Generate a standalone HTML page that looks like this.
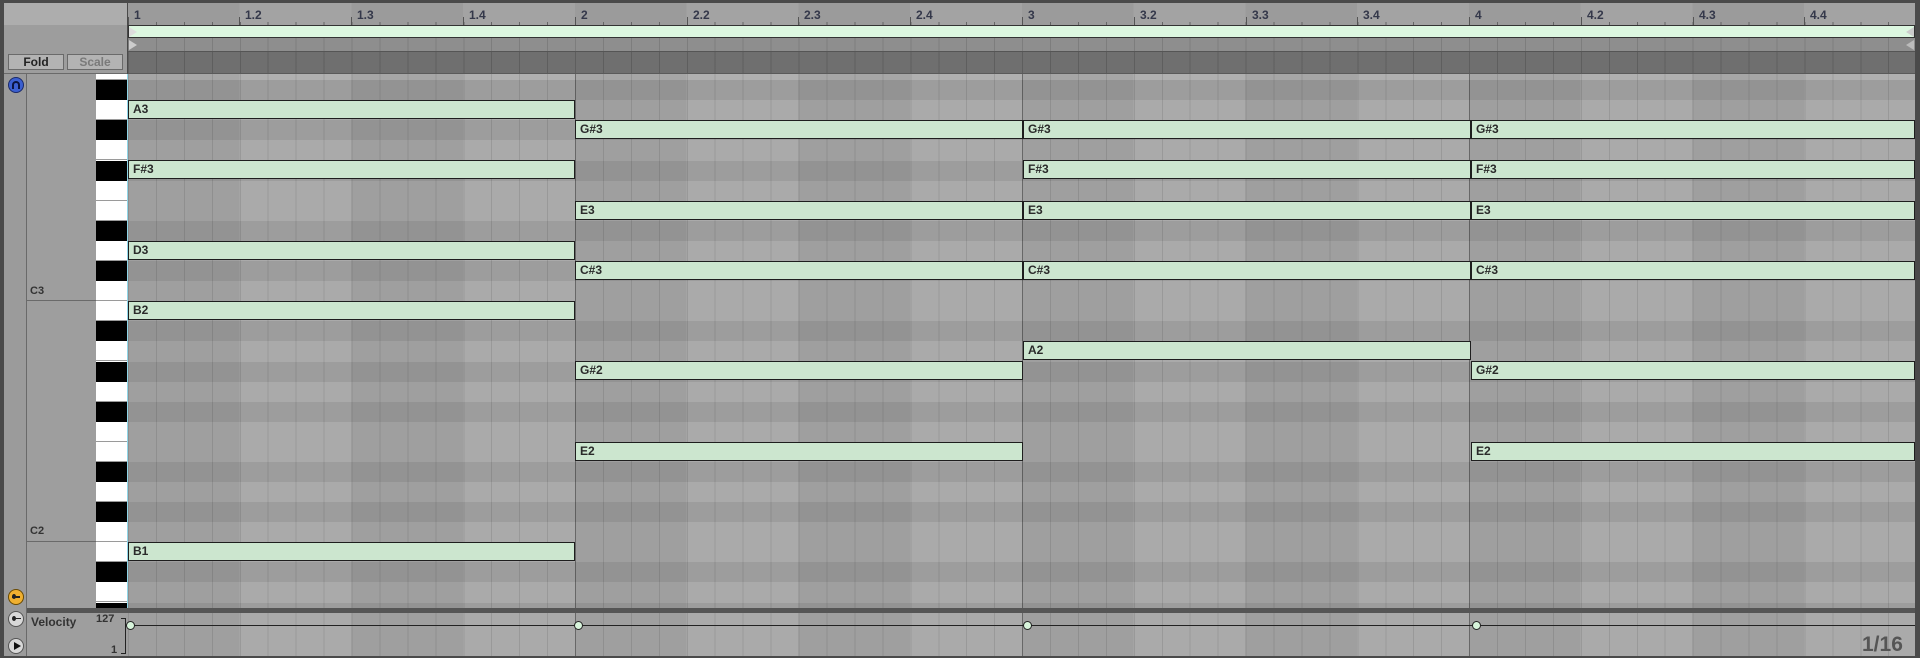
<!DOCTYPE html>
<html><head><meta charset="utf-8"><style>
*{margin:0;padding:0;box-sizing:border-box}
body{width:1920px;height:658px;overflow:hidden;background:#4a4a4a;font-family:"Liberation Sans",sans-serif;position:relative}
.a{position:absolute}
.grid{left:128px;top:74px;width:1787px;height:534px;background:#aaaaaa;overflow:hidden}
.cols{left:0;top:0;width:100%;height:100%;background:repeating-linear-gradient(90deg,rgba(0,0,0,.065) 0 111.75px,transparent 111.75px 223.5px)}
.lines{left:0;top:0;width:100%;height:100%;background:repeating-linear-gradient(90deg,rgba(0,0,0,.10) 0 1px,transparent 1px 27.94px)}
.bl{left:0;height:20px;width:100%;background:rgba(0,0,0,.075)}
.vb{top:0;width:1px;height:100%;background:rgba(0,0,0,.28)}
.n{height:18.5px;background:#cce6cf;border:1.5px solid #1e1e1e;font-size:12px;font-weight:bold;color:#2a2a2a;padding:1px 0 0 4px;line-height:14px;white-space:nowrap;overflow:hidden}
.k{left:96px;width:31px;height:20px}
.w{background:#fff;border-bottom:1px solid #9a9a9a}
.b{background:#000}
.rn{top:8px;font-size:12px;font-weight:bold;color:#34384a}
.tk{top:17px;width:1px;height:8px;background:#555}
.btn{top:54px;height:16px;background:#b3b3b3;border:1px solid #6a6a6a;font-size:12px;font-weight:bold;text-align:center;line-height:14px}
.ico{left:8px;width:16px;height:16px;border-radius:50%}
</style></head><body>
<div class="a" style="left:4px;top:3px;width:123px;height:49px;background:#adadad"></div>
<div class="a" style="left:4px;top:25px;width:123px;height:48px;background:#9d9d9d"></div>
<div class="btn a" style="left:8px;width:56px;color:#222">Fold</div>
<div class="btn a" style="left:67px;width:56px;color:#7a7a7a">Scale</div>
<div class="a" style="left:4px;top:73px;width:22px;height:583px;background:#9b9b9b"></div>
<div class="a" style="left:26px;top:73px;width:1px;height:583px;background:#6a6a6a"></div>
<div class="a" style="left:27px;top:73px;width:69px;height:535px;background:#9e9e9e"></div>
<div class="a" style="left:27px;top:300px;width:69px;height:1px;background:#6a6a6a"></div>
<div class="a" style="left:27px;top:541px;width:69px;height:1px;background:#6a6a6a"></div>
<div class="a" style="left:30px;top:285px;font-size:11px;font-weight:bold;color:#333">C3</div>
<div class="a" style="left:30px;top:525px;font-size:11px;font-weight:bold;color:#333">C2</div>
<div class="a" style="left:4px;top:73px;width:123px;height:1px;background:#6a6a6a"></div>
<div class="a ico" style="top:77px;background:#3b5fd0;border:1px solid #1b2a6a"><div class="a" style="left:3px;top:3px;width:8px;height:8px;border:2px solid #0b1440;border-bottom:none;border-radius:4px 4px 0 0"></div></div>
<div class="a ico" style="top:589px;background:#f0b030;border:1px solid #6a4a00"><div class="a" style="left:3px;top:6px;width:8px;height:2px;background:#222"></div><div class="a" style="left:3px;top:4px;width:4px;height:5px;border-radius:50%;background:#222"></div></div>
<div class="a ico" style="top:611px;background:#d8d8d8;border:1px solid #555"><div class="a" style="left:3px;top:4px;width:4px;height:5px;border-radius:50%;background:#222"></div><div class="a" style="left:7px;top:6px;width:5px;height:1px;background:#222"></div></div>
<div class="a ico" style="top:638px;background:#d8d8d8;border:1px solid #555"><div class="a" style="left:5px;top:3px;width:0;height:0;border-left:7px solid #111;border-top:4px solid transparent;border-bottom:4px solid transparent"></div></div>
<div class="a" style="left:128px;top:3px;width:1787px;height:22px;background:#a3a3a3;background-image:repeating-linear-gradient(90deg,rgba(0,0,0,.05) 0 111.75px,transparent 111.75px 223.5px)"></div>
<div class="a" style="left:128px;top:22px;width:1787px;height:3px;background:repeating-linear-gradient(90deg,#666 0 1px,transparent 1px 27.94px)"></div>
<div class="a tk" style="left:128px"></div><div class="a rn" style="left:134px">1</div>
<div class="a tk" style="left:239px"></div><div class="a rn" style="left:245px">1.2</div>
<div class="a tk" style="left:351px"></div><div class="a rn" style="left:357px">1.3</div>
<div class="a tk" style="left:463px"></div><div class="a rn" style="left:469px">1.4</div>
<div class="a tk" style="left:575px"></div><div class="a rn" style="left:581px">2</div>
<div class="a tk" style="left:687px"></div><div class="a rn" style="left:693px">2.2</div>
<div class="a tk" style="left:798px"></div><div class="a rn" style="left:804px">2.3</div>
<div class="a tk" style="left:910px"></div><div class="a rn" style="left:916px">2.4</div>
<div class="a tk" style="left:1022px"></div><div class="a rn" style="left:1028px">3</div>
<div class="a tk" style="left:1134px"></div><div class="a rn" style="left:1140px">3.2</div>
<div class="a tk" style="left:1246px"></div><div class="a rn" style="left:1252px">3.3</div>
<div class="a tk" style="left:1357px"></div><div class="a rn" style="left:1363px">3.4</div>
<div class="a tk" style="left:1469px"></div><div class="a rn" style="left:1475px">4</div>
<div class="a tk" style="left:1581px"></div><div class="a rn" style="left:1587px">4.2</div>
<div class="a tk" style="left:1693px"></div><div class="a rn" style="left:1699px">4.3</div>
<div class="a tk" style="left:1804px"></div><div class="a rn" style="left:1810px">4.4</div>
<div class="a" style="left:128px;top:25px;width:1787px;height:13px;background:#dcf7e0;border:1px solid #333"></div>
<div class="a" style="left:128px;top:38px;width:1787px;height:14px;background:#8e8e8e;background-image:repeating-linear-gradient(90deg,rgba(0,0,0,.12) 0 1px,transparent 1px 27.94px)"></div>
<div class="a" style="left:128px;top:52px;width:1787px;height:22px;background:#6f6f6f;background-image:repeating-linear-gradient(90deg,rgba(0,0,0,.15) 0 1px,transparent 1px 27.94px)"></div>
<div class="a" style="left:128px;top:51px;width:1787px;height:1px;background:#555"></div>
<div class="a" style="left:128px;top:73px;width:1787px;height:1px;background:#5a5a5a"></div>
<div class="a" style="left:129px;top:27px;border-left:8px solid #ddd;border-top:5px solid transparent;border-bottom:5px solid transparent"></div>
<div class="a" style="left:129px;top:40px;border-left:8px solid #ccc;border-top:5px solid transparent;border-bottom:5px solid transparent"></div>
<div class="a" style="left:1906px;top:27px;border-right:8px solid #ccc;border-top:5px solid transparent;border-bottom:5px solid transparent"></div>
<div class="a" style="left:1906px;top:40px;border-right:8px solid #bbb;border-top:5px solid transparent;border-bottom:5px solid transparent"></div>
<div class="a" style="left:96px;top:74px;width:31px;height:534px;background:#fff"></div>
<div class="a k w" style="top:74px;height:6px"></div>
<div class="a k b" style="top:80px"></div>
<div class="a k w" style="top:100px"></div>
<div class="a k b" style="top:120px"></div>
<div class="a k w" style="top:140px"></div>
<div class="a k b" style="top:161px"></div>
<div class="a k w" style="top:181px"></div>
<div class="a k w" style="top:201px"></div>
<div class="a k b" style="top:221px"></div>
<div class="a k w" style="top:241px"></div>
<div class="a k b" style="top:261px"></div>
<div class="a k w" style="top:281px"></div>
<div class="a k w" style="top:301px"></div>
<div class="a k b" style="top:321px"></div>
<div class="a k w" style="top:341px"></div>
<div class="a k b" style="top:362px"></div>
<div class="a k w" style="top:382px"></div>
<div class="a k b" style="top:402px"></div>
<div class="a k w" style="top:422px"></div>
<div class="a k w" style="top:442px"></div>
<div class="a k b" style="top:462px"></div>
<div class="a k w" style="top:482px"></div>
<div class="a k b" style="top:502px"></div>
<div class="a k w" style="top:522px"></div>
<div class="a k w" style="top:542px"></div>
<div class="a k b" style="top:562px"></div>
<div class="a k w" style="top:582px"></div>
<div class="a k b" style="top:603px;height:5px"></div>
<div class="a" style="left:127px;top:74px;width:1px;height:582px;background:#8fd6e8"></div>
<div class="a grid">
<div class="a cols"></div>
<div class="a" style="left:0;top:0;width:100%;height:6px;background:rgba(255,255,255,.08)"></div>
<div class="a bl" style="top:6px"></div>
<div class="a bl" style="top:46px"></div>
<div class="a bl" style="top:87px"></div>
<div class="a bl" style="top:147px"></div>
<div class="a bl" style="top:187px"></div>
<div class="a bl" style="top:247px"></div>
<div class="a bl" style="top:288px"></div>
<div class="a bl" style="top:328px"></div>
<div class="a bl" style="top:388px"></div>
<div class="a bl" style="top:428px"></div>
<div class="a bl" style="top:488px"></div>
<div class="a bl" style="top:529px"></div>
<div class="a lines"></div>
<div class="a vb" style="left:447px"></div>
<div class="a vb" style="left:894px"></div>
<div class="a vb" style="left:1341px"></div>
</div>
<div class="a n" style="left:128px;top:100px;width:447px">A3</div>
<div class="a n" style="left:128px;top:160px;width:447px">F#3</div>
<div class="a n" style="left:128px;top:241px;width:447px">D3</div>
<div class="a n" style="left:128px;top:301px;width:447px">B2</div>
<div class="a n" style="left:128px;top:542px;width:447px">B1</div>
<div class="a n" style="left:575px;top:120px;width:448px">G#3</div>
<div class="a n" style="left:575px;top:201px;width:448px">E3</div>
<div class="a n" style="left:575px;top:261px;width:448px">C#3</div>
<div class="a n" style="left:575px;top:361px;width:448px">G#2</div>
<div class="a n" style="left:575px;top:442px;width:448px">E2</div>
<div class="a n" style="left:1023px;top:120px;width:448px">G#3</div>
<div class="a n" style="left:1023px;top:160px;width:448px">F#3</div>
<div class="a n" style="left:1023px;top:201px;width:448px">E3</div>
<div class="a n" style="left:1023px;top:261px;width:448px">C#3</div>
<div class="a n" style="left:1023px;top:341px;width:448px">A2</div>
<div class="a n" style="left:1471px;top:120px;width:444px">G#3</div>
<div class="a n" style="left:1471px;top:160px;width:444px">F#3</div>
<div class="a n" style="left:1471px;top:201px;width:444px">E3</div>
<div class="a n" style="left:1471px;top:261px;width:444px">C#3</div>
<div class="a n" style="left:1471px;top:361px;width:444px">G#2</div>
<div class="a n" style="left:1471px;top:442px;width:444px">E2</div>
<div class="a" style="left:27px;top:608px;width:1888px;height:5px;background:#555"></div>
<div class="a" style="left:27px;top:613px;width:101px;height:43px;background:#9e9e9e"></div>
<div class="a" style="left:128px;top:613px;width:1787px;height:43px;background:#aaaaaa;background-image:repeating-linear-gradient(90deg,rgba(0,0,0,.10) 0 1px,transparent 1px 27.94px),repeating-linear-gradient(90deg,rgba(0,0,0,.065) 0 111.75px,transparent 111.75px 223.5px)"></div>
<div class="a" style="left:575px;top:613px;width:1px;height:43px;background:rgba(0,0,0,.28)"></div>
<div class="a" style="left:1022px;top:613px;width:1px;height:43px;background:rgba(0,0,0,.28)"></div>
<div class="a" style="left:1469px;top:613px;width:1px;height:43px;background:rgba(0,0,0,.28)"></div>
<div class="a" style="left:31px;top:615px;font-size:12px;font-weight:bold;color:#333">Velocity</div>
<div class="a" style="left:96px;top:613px;font-size:11px;font-weight:bold;color:#333">127</div>
<div class="a" style="left:111px;top:644px;font-size:11px;font-weight:bold;color:#333">1</div>
<div class="a" style="left:121px;top:618px;width:5px;height:36px;border:1px solid #222;border-left:none"></div>
<div class="a" style="left:128px;top:625px;width:1787px;height:1px;background:#222"></div>
<div class="a" style="left:126px;top:621px;width:9px;height:9px;border-radius:50%;background:#d8f5dc;border:1.5px solid #222"></div>
<div class="a" style="left:574px;top:621px;width:9px;height:9px;border-radius:50%;background:#d8f5dc;border:1.5px solid #222"></div>
<div class="a" style="left:1023px;top:621px;width:9px;height:9px;border-radius:50%;background:#d8f5dc;border:1.5px solid #222"></div>
<div class="a" style="left:1472px;top:621px;width:9px;height:9px;border-radius:50%;background:#d8f5dc;border:1.5px solid #222"></div>
<div class="a" style="left:1862px;top:633px;font-size:21px;font-weight:bold;color:#555">1/16</div>
</body></html>
